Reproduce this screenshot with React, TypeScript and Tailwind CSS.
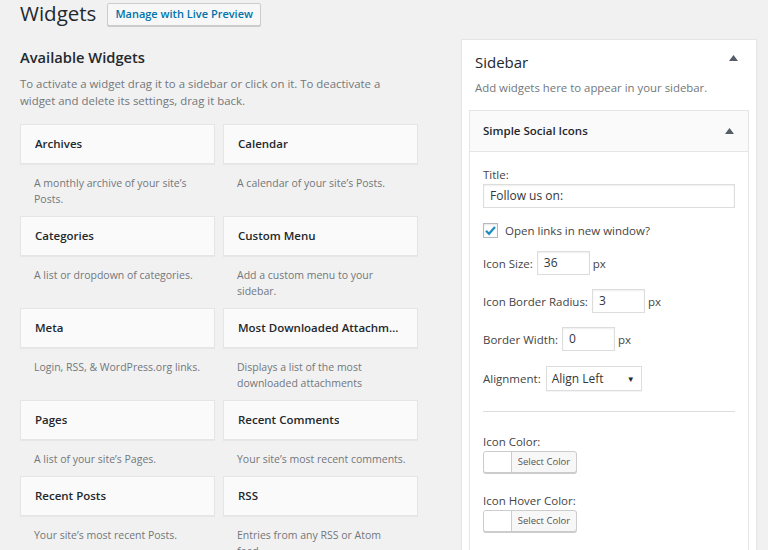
import React from "react";

type Widget = { name: string; desc: string; tight?: boolean };

const widgets: Widget[][] = [
  [
    { name: "Archives", desc: "A monthly archive of your site\u2019s Posts." },
    { name: "Calendar", desc: "A calendar of your site\u2019s Posts." },
  ],
  [
    { name: "Categories", desc: "A list or dropdown of categories." },
    { name: "Custom Menu", desc: "Add a custom menu to your sidebar." },
  ],
  [
    { name: "Meta", desc: "Login, RSS, & WordPress.org links." },
    { name: "Most Downloaded Attachments", desc: "Displays a list of the most downloaded attachments" },
  ],
  [
    { name: "Pages", desc: "A list of your site\u2019s Pages." },
    // this one fits on a single line in the original
    { name: "Recent Comments", desc: "Your site\u2019s most recent comments.", tight: true },
  ],
  [
    { name: "Recent Posts", desc: "Your site\u2019s most recent Posts." },
    { name: "RSS", desc: "Entries from any RSS or Atom feed." },
  ],
];

function UpArrow() {
  // small filled triangle used by the collapse toggles
  return (
    <svg width="9" height="6" viewBox="0 0 9 6" className="fill-[#555d66]">
      <path d="M0 6 L4.5 0 L9 6 Z" />
    </svg>
  );
}

function WidgetCard({ w }: { w: Widget }) {
  return (
    <div className="w-[195px]">
      <div className="flex h-10 items-center border border-[#e5e5e5] bg-[#fafafa] px-[14px] shadow-[0_1px_1px_rgba(0,0,0,0.04)]">
        <span className="truncate text-[11.5px] font-semibold text-[#23282d]">{w.name}</span>
      </div>
      <p
        className={
          w.tight
            ? "pt-[11px] pr-[2px] pb-[9px] pl-[14px] text-[10.5px] leading-4 text-[#72777c]"
            : "pt-[11px] pr-[13px] pb-[9px] pl-[14px] text-[10.5px] leading-4 text-[#72777c]"
        }
      >
        {w.desc}
      </p>
    </div>
  );
}

function NumberRow({ label, value, first }: { label: string; value: string; first?: boolean }) {
  return (
    <div className={first ? "mt-[12px] flex items-center" : "mt-[14px] flex items-center"}>
      <span className="mr-[4px] text-[11.5px] text-[#444]">{label}</span>
      <div className="flex h-6 w-[53px] items-center border border-[#ddd] bg-white px-[6px] text-[12px] text-[#32373c] shadow-[inset_0_1px_2px_rgba(0,0,0,0.07)]">
        {value}
      </div>
      <span className="ml-[3px] text-[11.5px] text-[#444]">px</span>
    </div>
  );
}

function ColorPicker() {
  return (
    <div className="flex h-[22px] w-[94px] overflow-hidden rounded-[3px] border border-[#ccc] bg-[#f7f7f7] shadow-[0_1px_0_#ccc]">
      <div className="w-[28px] border-r border-[#ccc] bg-white" />
      <div className="flex flex-1 items-center justify-center text-[9.5px] text-[#555]">Select Color</div>
    </div>
  );
}

export default function App() {
  return (
    <div className="h-[550px] w-[768px] overflow-hidden bg-[#f1f1f1] font-['Open_Sans',sans-serif] text-[#444]">
      <div className="flex h-[27px] items-center gap-[11px] pl-5">
        <h1 className="text-[20.5px] leading-none text-[#23282d]">Widgets</h1>
        <button className="mt-[1px] h-[23px] rounded-[2px] border border-[#ccc] bg-[#f7f7f7] px-[7px] text-[11px] font-semibold text-[#0073aa] shadow-[0_1px_0_#ccc]">
          Manage with Live Preview
        </button>
      </div>

      <div className="mt-3 flex items-start pl-5">
        <div className="w-[398px]">
          <h2 className="pt-[7px] text-[14.7px] leading-[22px] font-semibold text-[#23282d]">Available Widgets</h2>
          <p className="mt-[7px] text-[11.4px] leading-[17px] text-[#72777c]">
            To activate a widget drag it to a sidebar or click on it. To deactivate a widget and delete its settings, drag it back.
          </p>
          <div className="mt-[15px] flex flex-col">
            {widgets.map((row, i) => (
              <div key={i} className="flex gap-2">
                {row.map((w) => (
                  <WidgetCard key={w.name} w={w} />
                ))}
              </div>
            ))}
          </div>
        </div>

        <div className="ml-[43px] w-[296px] border border-[#e5e5e5] bg-white px-[7px] shadow-[0_1px_1px_rgba(0,0,0,0.04)]">
          <div className="flex items-start justify-between pt-[10px] pr-[11px] pl-[6px]">
            <h2 className="text-[15px] leading-6 text-[#23282d]">Sidebar</h2>
            <div className="pt-[5px]">
              <UpArrow />
            </div>
          </div>
          <p className="mt-[5px] pl-[6px] text-[11.4px] leading-[18px] text-[#72777c]">
            Add widgets here to appear in your sidebar.
          </p>

          <div className="mt-[13px] border border-[#e5e5e5] shadow-[0_1px_1px_rgba(0,0,0,0.04)]">
            <div className="flex h-10 items-center justify-between bg-[#fafafa] pr-[14px] pl-[13px]">
              <span className="text-[11.5px] font-semibold text-[#23282d]">Simple Social Icons</span>
              <UpArrow />
            </div>
            <div className="h-[420px] border-t border-[#e5e5e5] bg-white px-[13px] pt-[14px]">
              <div className="text-[11.5px] leading-[18px] text-[#444]">Title:</div>
              <div className="flex h-6 items-center border border-[#ddd] bg-white px-[6px] text-[12px] text-[#32373c] shadow-[inset_0_1px_2px_rgba(0,0,0,0.07)]">
                Follow us on:
              </div>

              <label className="mt-[14px] flex items-center gap-[7px]">
                <span className="flex h-[15px] w-[15px] items-center justify-center border border-[#b4b9be] bg-white shadow-[inset_0_1px_2px_rgba(0,0,0,0.1)]">
                  <svg width="13" height="13" viewBox="0 0 13 13" className="stroke-[#1e8cbe]" fill="none">
                    <path d="M2 6.8 L5 9.8 L11 3" strokeWidth="2.2" />
                  </svg>
                </span>
                <span className="text-[11.5px] text-[#444]">Open links in new window?</span>
              </label>

              <NumberRow label="Icon Size:" value="36" first />
              <NumberRow label="Icon Border Radius:" value="3" />
              <NumberRow label="Border Width:" value="0" />

              <div className="mt-[15px] flex items-center">
                <span className="mr-[5px] text-[11.5px] text-[#444]">Alignment:</span>
                <div className="flex h-[25px] w-[96px] items-center justify-between border border-[#ddd] bg-white pr-[6px] pl-[5px] text-[12px] text-[#32373c] shadow-[0_1px_1px_rgba(0,0,0,0.04)]">
                  <span>Align Left</span>
                  <span className="text-[8px] text-[#23282d]">{"\u25BC"}</span>
                </div>
              </div>

              <hr className="mt-[20px] border-t border-[#ddd]" />

              <div className="mt-[21px] text-[11.5px] leading-[18px] text-[#444]">Icon Color:</div>
              <ColorPicker />
              <div className="mt-[19px] text-[11.5px] leading-[18px] text-[#444]">Icon Hover Color:</div>
              <ColorPicker />
            </div>
          </div>
        </div>
      </div>
    </div>
  );
}
